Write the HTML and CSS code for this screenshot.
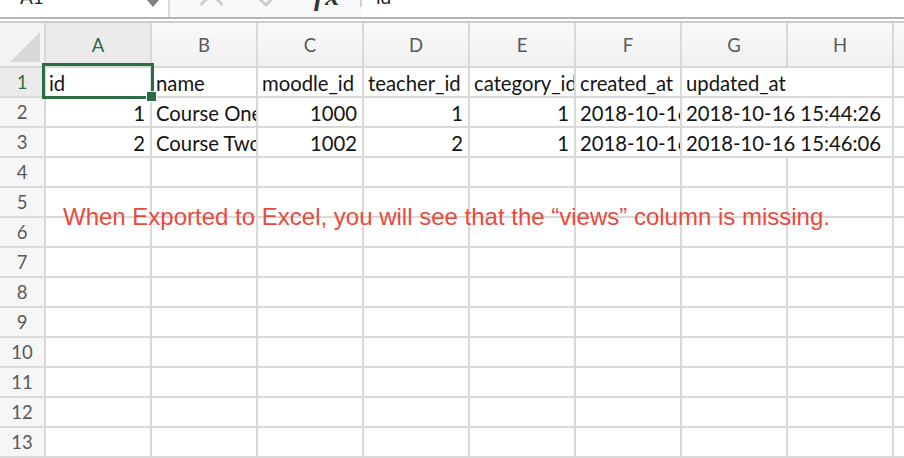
FILE: index.html
```html
<!DOCTYPE html>
<html lang="en">
<head>
    <meta charset="UTF-8">
    <meta name="viewport" content="width=device-width, initial-scale=1.0">
    <title>courses.xlsx</title>
    <link rel="stylesheet" href="styles.css">
</head>
<body>
    <div class="formula-bar">
        <div class="name-box">
            <span class="bar-text">A1</span>
            <svg class="name-arrow" width="14" height="8" viewBox="0 0 14 8">
                <polygon points="1,0 13,0 7,7" fill="#808080"/>
            </svg>
        </div>
        <div class="formula-tools">
            <svg class="tool-icons" width="140" height="17" viewBox="0 0 140 17">
                <path d="M30.5 5 L52.5 -17 M52.5 5 L30.5 -17" stroke="#cdcdcd" stroke-width="3" fill="none"/>
                <polyline points="84,-6 96,5 113,-12" stroke="#cdcdcd" stroke-width="3" fill="none"/>
            </svg>
            <span class="fx">fx</span>
        </div>
        <div class="formula-input">
            <span class="bar-text">id</span>
        </div>
    </div>
    <div class="bar-divider"></div>

    <div class="sheet">
        <div class="grid">
            <!-- column headers -->
            <div class="cell corner">
                <svg width="44" height="43" viewBox="0 0 44 43">
                    <polygon points="10,39 40,39 40,9" fill="#d8d8d8"/>
                </svg>
            </div>
            <div class="cell col-head active">A</div>
            <div class="cell col-head">B</div>
            <div class="cell col-head">C</div>
            <div class="cell col-head">D</div>
            <div class="cell col-head">E</div>
            <div class="cell col-head">F</div>
            <div class="cell col-head">G</div>
            <div class="cell col-head">H</div>
            <div class="cell col-head"></div>

            <!-- row 1 -->
            <div class="cell row-head active">1</div>
            <div class="cell selected">id<span class="fill-handle"></span></div>
            <div class="cell">name</div>
            <div class="cell">moodle_id</div>
            <div class="cell">teacher_id</div>
            <div class="cell">category_id</div>
            <div class="cell">created_at</div>
            <div class="cell wide">updated_at</div>
            <div class="cell"></div>

            <!-- row 2 -->
            <div class="cell row-head">2</div>
            <div class="cell num">1</div>
            <div class="cell">Course One</div>
            <div class="cell num">1000</div>
            <div class="cell num">1</div>
            <div class="cell num">1</div>
            <div class="cell">2018-10-16 15:44:26</div>
            <div class="cell wide">2018-10-16 15:44:26</div>
            <div class="cell"></div>

            <!-- row 3 -->
            <div class="cell row-head">3</div>
            <div class="cell num">2</div>
            <div class="cell">Course Two</div>
            <div class="cell num">1002</div>
            <div class="cell num">2</div>
            <div class="cell num">1</div>
            <div class="cell">2018-10-16 15:46:06</div>
            <div class="cell wide">2018-10-16 15:46:06</div>
            <div class="cell"></div>

            <!-- empty rows -->
            <div class="cell row-head">4</div><div class="cell"></div><div class="cell"></div><div class="cell"></div><div class="cell"></div><div class="cell"></div><div class="cell"></div><div class="cell"></div><div class="cell"></div><div class="cell"></div>
            <div class="cell row-head">5</div><div class="cell"></div><div class="cell"></div><div class="cell"></div><div class="cell"></div><div class="cell"></div><div class="cell"></div><div class="cell"></div><div class="cell"></div><div class="cell"></div>
            <div class="cell row-head">6</div><div class="cell"></div><div class="cell"></div><div class="cell"></div><div class="cell"></div><div class="cell"></div><div class="cell"></div><div class="cell"></div><div class="cell"></div><div class="cell"></div>
            <div class="cell row-head">7</div><div class="cell"></div><div class="cell"></div><div class="cell"></div><div class="cell"></div><div class="cell"></div><div class="cell"></div><div class="cell"></div><div class="cell"></div><div class="cell"></div>
            <div class="cell row-head">8</div><div class="cell"></div><div class="cell"></div><div class="cell"></div><div class="cell"></div><div class="cell"></div><div class="cell"></div><div class="cell"></div><div class="cell"></div><div class="cell"></div>
            <div class="cell row-head">9</div><div class="cell"></div><div class="cell"></div><div class="cell"></div><div class="cell"></div><div class="cell"></div><div class="cell"></div><div class="cell"></div><div class="cell"></div><div class="cell"></div>
            <div class="cell row-head">10</div><div class="cell"></div><div class="cell"></div><div class="cell"></div><div class="cell"></div><div class="cell"></div><div class="cell"></div><div class="cell"></div><div class="cell"></div><div class="cell"></div>
            <div class="cell row-head">11</div><div class="cell"></div><div class="cell"></div><div class="cell"></div><div class="cell"></div><div class="cell"></div><div class="cell"></div><div class="cell"></div><div class="cell"></div><div class="cell"></div>
            <div class="cell row-head">12</div><div class="cell"></div><div class="cell"></div><div class="cell"></div><div class="cell"></div><div class="cell"></div><div class="cell"></div><div class="cell"></div><div class="cell"></div><div class="cell"></div>
            <div class="cell row-head">13</div><div class="cell"></div><div class="cell"></div><div class="cell"></div><div class="cell"></div><div class="cell"></div><div class="cell"></div><div class="cell"></div><div class="cell"></div><div class="cell"></div>
            <div class="cell row-head">14</div><div class="cell"></div><div class="cell"></div><div class="cell"></div><div class="cell"></div><div class="cell"></div><div class="cell"></div><div class="cell"></div><div class="cell"></div><div class="cell"></div>
        </div>

        <p class="note">When Exported to Excel, you will see that the “views” column is missing.</p>
    </div>
</body>
</html>
```

FILE: styles.css
```css
:root {
    --grid-line: #d9d9d9;
    --head-text: #5a5a5a;
    --excel-green: #2b6e43;
    --note-red: #ea4a3d;
}

* {
    margin: 0;
    padding: 0;
    box-sizing: border-box;
}

body {
    width: 904px;
    height: 458px;
    overflow: hidden;
    background: #fff;
    font-family: Lato, 'Open Sans', sans-serif;
    color: #141414;
}

/* formula bar (cut off at the top of the shot) */
.formula-bar {
    display: flex;
    height: 19px;
    overflow: hidden;
    border-bottom: 2px solid #b4b4b4;
}

.bar-text {
    display: block;
    font-size: 19px;
    line-height: 20px;
    margin-top: -13px;
    color: #222;
}

.name-box {
    width: 170px;
    position: relative;
    padding-left: 20px;
    border-right: 2px solid #dcdcdc;
}

.name-arrow {
    position: absolute;
    top: 0;
    left: 146px;
}

.formula-tools {
    width: 192px;
    display: flex;
    position: relative;
    background: #fafafa;
}

.formula-tools::after {
    content: '';
    position: absolute;
    right: 0;
    top: 0;
    width: 2px;
    height: 7px;
    background: #cfcfcf;
}

.fx {
    display: block;
    margin-left: 4px;
    margin-top: -14px;
    font-family: 'Liberation Serif', serif;
    font-style: italic;
    font-weight: bold;
    font-size: 28px;
    line-height: 20px;
    letter-spacing: 2px;
    color: #333;
}

.formula-input {
    flex: 1;
    padding-left: 14px;
}

.bar-divider {
    height: 4px;
    border-bottom: 2px solid #cdcdcd;
}

/* sheet */
.sheet {
    position: relative;
}

.grid {
    display: grid;
    grid-template-columns: 44px repeat(8, 104px) 1fr;
    grid-template-rows: 43px;
    grid-auto-rows: 28px;
    gap: 2px;
    background: var(--grid-line);
}

.cell {
    display: flex;
    align-items: flex-end;
    padding: 0 4px 2px;
    background: #fff;
    overflow: hidden;
    white-space: nowrap;
    font-size: 20.3px;
    line-height: 22px;
}

.num {
    justify-content: flex-end;
    padding-right: 5px;
}

.wide {
    grid-column: span 2;
}

.corner {
    padding: 0;
    background: #f3f3f3;
}

.col-head {
    justify-content: center;
    align-items: center;
    padding: 0;
    background: linear-gradient(#f9f9f9, #f1f1f1);
    color: var(--head-text);
    font-size: 18.5px;
}

.row-head {
    justify-content: center;
    align-items: center;
    padding: 0 0 1px;
    background: #f6f6f6;
    color: var(--head-text);
    font-size: 18.5px;
}

.col-head.active,
.row-head.active {
    background: #ebebeb;
    color: var(--excel-green);
}

.selected {
    position: relative;
    overflow: visible;
    padding-left: 3px;
}

.selected::after {
    content: '';
    position: absolute;
    top: -5px;
    left: -4px;
    right: -4px;
    bottom: -3px;
    border: 3px solid var(--excel-green);
}

.fill-handle {
    position: absolute;
    right: -6px;
    bottom: -5px;
    width: 9px;
    height: 9px;
    background: var(--excel-green);
    outline: 1px solid #fff;
    z-index: 1;
}

.note {
    position: absolute;
    top: 180px;
    left: 63px;
    font-family: 'Liberation Sans', Arial, sans-serif;
    font-size: 24px;
    color: var(--note-red);
    white-space: nowrap;
}
```
